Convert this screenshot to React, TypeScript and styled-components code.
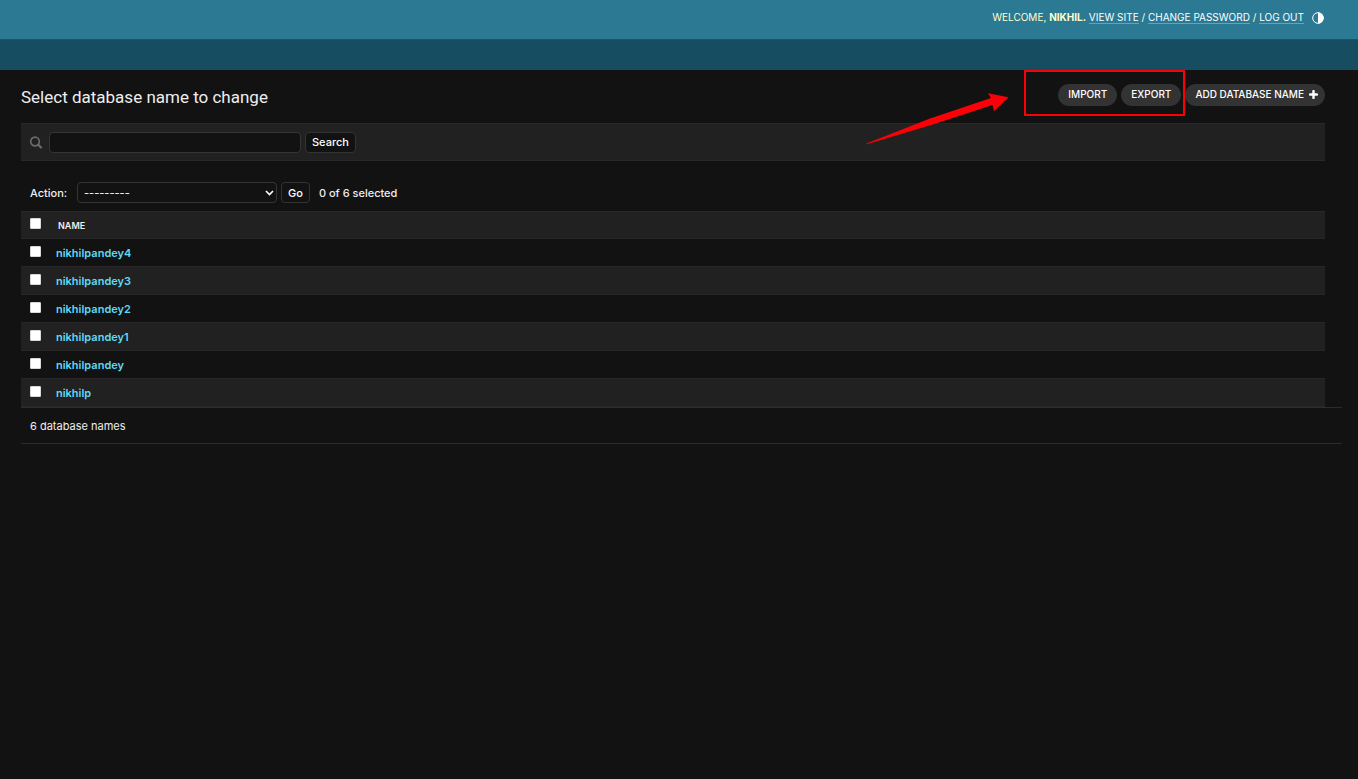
import React from "react";
import styled, { createGlobalStyle } from "styled-components";

const GlobalStyle = createGlobalStyle`
  *, *::before, *::after { box-sizing: border-box; }
  body {
    margin: 0;
    background: #121212;
    color: #eeeeee;
    font-family: Inter, Roboto, "Liberation Sans", sans-serif;
    font-size: 11px;
    line-height: 16px;
  }
  button, input, select { font: inherit; color: inherit; margin: 0; }
`;

const Header = styled.header`
  display: flex;
  justify-content: flex-end;
  align-items: center;
  height: 39px;
  padding: 0 34px 4px 21px;
  background: #2b7993;
  color: #ffffcc;
`;

const UserTools = styled.div`
  display: flex;
  align-items: center;
  gap: 8px;
  font-size: 10px;
  line-height: 12px;
  text-transform: uppercase;
  white-space: nowrap;
`;

const UserLink = styled.a`
  display: inline-block;
  color: #ffffff;
  text-decoration: none;
  border-bottom: 1px solid rgba(255, 255, 255, 0.3);
`;

const ThemeToggle = styled.button`
  display: flex;
  padding: 1px 0 0;
  border: 0;
  background: none;
  color: #ffffff;
`;

const Breadcrumbs = styled.nav`
  height: 31px;
  background: #164d60;
  border-top: 1px solid #1a566a;
`;

const Main = styled.main`
  padding: 0 16px 0 21px;
`;

const Body = styled.div`
  margin-right: 17px;
`;

const TitleRow = styled.div`
  position: relative;
  display: flex;
  justify-content: space-between;
  align-items: center;
  height: 53px;
`;

const Title = styled.h1`
  margin: 0;
  font-family: Roboto, "Liberation Sans", sans-serif;
  font-size: 17px;
  line-height: 24px;
  font-weight: 400;
`;

const ObjectTools = styled.ul`
  display: flex;
  gap: 4px;
  margin: 0;
  padding: 0 0 4px;
  list-style: none;
`;

const ToolLink = styled.a<{ $icon?: boolean }>`
  display: flex;
  align-items: center;
  gap: 5px;
  height: 22px;
  padding: 0 ${(p) => (p.$icon ? 7 : 10)}px 1px 10px;
  border-radius: 11px;
  background: #333333;
  color: #ffffff;
  font-size: 10px;
  font-weight: 500;
  text-transform: uppercase;
  text-decoration: none;
  white-space: nowrap;
`;

const Highlight = styled.div`
  position: absolute;
  top: 0;
  right: 140px;
  width: 161px;
  height: 46px;
  border: 2px solid #fb0007;
`;

const Arrow = styled.svg`
  position: absolute;
  top: 22px;
  right: 315px;
`;

const SearchBar = styled.form`
  display: flex;
  align-items: center;
  gap: 4px;
  height: 38px;
  padding: 0 8px;
  background: #212121;
  border-top: 1px solid #282828;
  border-bottom: 1px solid #282828;
`;

const SearchLabel = styled.label`
  display: flex;
  width: 16px;
  color: #6b6b6b;
`;

const SearchInput = styled.input`
  width: 252px;
  height: 21px;
  padding: 2px 6px;
  border: 1px solid #353535;
  border-radius: 4px;
  background: #121212;
`;

const Button = styled.button`
  height: 21px;
  padding: 0 6px;
  border: 1px solid #333333;
  border-radius: 4px;
  background: #121212;
  font-weight: 500;
  color: #ffffff;
`;

const Actions = styled.form`
  display: flex;
  align-items: center;
  gap: 4px;
  padding: 21px 9px 8px;
`;

const ActionLabel = styled.label`
  width: 43px;
  font-weight: 500;
`;

const SelectBox = styled.div`
  display: grid;
  align-items: center;
  width: 200px;

  > * { grid-area: 1 / 1; }
  > svg { justify-self: end; margin-right: 3px; pointer-events: none; }
`;

const ActionSelect = styled.select`
  appearance: none;
  width: 100%;
  height: 21px;
  padding: 0 6px;
  border: 1px solid #353535;
  border-radius: 4px;
  background: #121212;
  font-weight: 500;
`;

const Counter = styled.span`
  margin-left: 5px;
  font-weight: 500;
`;

const Results = styled.table`
  width: 100%;
  border-collapse: separate;
  border-spacing: 0;
  border-bottom: 1px solid #282828;
  table-layout: fixed;
`;

const Row = styled.tr<{ $raised?: boolean }>`
  height: 28px;
  background: ${(p) => (p.$raised ? "#212121" : "#121212")};

  > * { border-top: 1px solid #282828; }
`;

const HeadRow = styled(Row)`
  height: 27px;
`;

const CheckCell = styled.td`
  width: 35px;
  padding: 0 0 3px 9px;
`;

const HeadCell = styled.th`
  padding: 2px 0 0 2px;
  text-align: left;
  font-size: 9px;
  font-weight: 600;
  text-transform: uppercase;
`;

const NameCell = styled.th`
  padding: 0;
  text-align: left;
`;

const NameLink = styled.a`
  color: #5fd9f7;
  font-weight: 600;
  text-decoration: none;
`;

const Checkbox = styled.input`
  display: block;
  appearance: none;
  width: 11px;
  height: 11px;
  border: 1px solid #d8d8d8;
  border-radius: 1px;
  background: #ffffff;

  &:checked { background: #2b7993; }
`;

const Paginator = styled.p`
  margin: 0;
  padding: 10px 9px 9px;
  border-top: 1px solid #2c2c2c;
  border-bottom: 1px solid #2c2c2c;
`;

const names = [
  "nikhilpandey4",
  "nikhilpandey3",
  "nikhilpandey2",
  "nikhilpandey1",
  "nikhilpandey",
  "nikhilp",
];

export default function App() {
  return (
    <>
      <GlobalStyle />
      <Header>
        <UserTools>
          <span>
            Welcome, <strong>Nikhil.</strong> <UserLink href="#site">View site</UserLink>
            {" / "}
            <UserLink href="#password">Change password</UserLink>
            {" / "}
            <UserLink href="#logout">Log out</UserLink>
          </span>
          <ThemeToggle type="button" aria-label="Toggle theme">
            <svg width="12" height="12" viewBox="0 0 12 12">
              <circle cx="6" cy="6" r="5.3" fill="none" stroke="currentColor" />
              <path d="M6 .5a5.5 5.5 0 0 1 0 11z" fill="currentColor" />
            </svg>
          </ThemeToggle>
        </UserTools>
      </Header>
      <Breadcrumbs aria-label="Breadcrumbs" />
      <Main>
        <Body>
          <TitleRow>
            <Title>Select database name to change</Title>
            <ObjectTools>
              <li><ToolLink href="#import">Import</ToolLink></li>
              <li><ToolLink href="#export">Export</ToolLink></li>
              <li>
                <ToolLink href="#add" $icon>
                  Add database name
                  <svg width="9" height="9" viewBox="0 0 9 9" aria-hidden="true">
                    <path d="M4.5 1v7M1 4.5h7" stroke="currentColor" strokeWidth="2.4" strokeLinecap="round" />
                  </svg>
                </ToolLink>
              </li>
            </ObjectTools>
            <Highlight />
            <Arrow width="144" height="54" viewBox="0 0 144 54" aria-hidden="true">
              <path d="M.5 51.5 64 26.500 125 6 122 1.300 142.500 5.200 128 19.200 126.500 13 66 32.800 1 52.300Z" fill="#fb0007" />
            </Arrow>
          </TitleRow>
          <SearchBar onSubmit={(e) => e.preventDefault()}>
            <SearchLabel htmlFor="searchbar" aria-label="Search">
              <svg width="14" height="14" viewBox="0 0 14 14" fill="none" stroke="currentColor">
                <circle cx="6" cy="6.500" r="4.300" strokeWidth="1.700" />
                <path d="m9.300 9.800 2.700 2.700" strokeWidth="2.200" strokeLinecap="round" />
              </svg>
            </SearchLabel>
            <SearchInput id="searchbar" type="text" />
            <Button type="submit">Search</Button>
          </SearchBar>
          <Actions onSubmit={(e) => e.preventDefault()}>
            <ActionLabel htmlFor="action">Action:</ActionLabel>
            <SelectBox>
              <ActionSelect id="action">
                <option>---------</option>
                <option>Delete selected database names</option>
              </ActionSelect>
              <svg width="9" height="6" viewBox="0 0 9 6" fill="none" aria-hidden="true">
                <path d="m1 1 3.500 3.500L8 1" stroke="#ffffff" strokeWidth="1.600" />
              </svg>
            </SelectBox>
            <Button type="submit">Go</Button>
            <Counter>0 of 6 selected</Counter>
          </Actions>
          <Results>
            <thead>
              <HeadRow $raised>
                <CheckCell><Checkbox type="checkbox" aria-label="Select all" /></CheckCell>
                <HeadCell scope="col">Name</HeadCell>
              </HeadRow>
            </thead>
            <tbody>
              {names.map((name, i) => (
                <Row key={name} $raised={i % 2 === 1}>
                  <CheckCell><Checkbox type="checkbox" aria-label={`Select ${name}`} /></CheckCell>
                  <NameCell scope="row"><NameLink href={`#${name}`}>{name}</NameLink></NameCell>
                </Row>
              ))}
            </tbody>
          </Results>
        </Body>
        <Paginator>6 database names</Paginator>
      </Main>
    </>
  );
}
